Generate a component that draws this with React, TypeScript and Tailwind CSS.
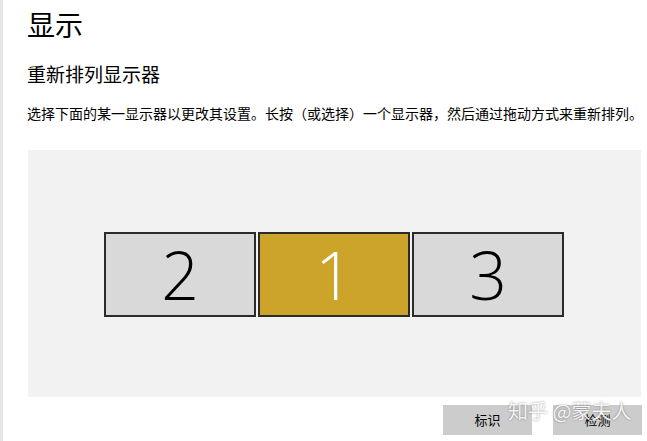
import React from "react";

const cjk = { fontFamily: '"Noto Sans CJK SC", "Noto Sans", sans-serif' };

function Monitor({ n, active }: { n: string; active?: boolean }) {
  return (
    <div
      className={`flex h-[85px] w-[152px] items-center justify-center border-2 border-[#2b2b2b] ${
        active ? "bg-[#cca42a] text-white" : "bg-[#d9d9d9] text-black"
      }`}
    >
      <span
        className="text-[66px] font-light leading-none"
        style={{ fontFamily: '"Open Sans", "Noto Sans", sans-serif' }}
      >
        {n}
      </span>
    </div>
  );
}

export default function App() {
  return (
    <div className="flex h-[441px] w-[647px] overflow-hidden bg-white" style={cjk}>
      <div className="w-[3px] shrink-0 bg-[#e6e6e6]" />
      <div className="relative flex flex-1 flex-col pl-[24px]">
        <h1 className="mt-[6px] text-[28px] leading-[36px] text-black">显示</h1>
        <h2 className="mt-[19px] text-[19px] leading-[26px] text-black">重新排列显示器</h2>
        <p className="mt-[16px] text-[14px] leading-[20px] text-black">
          选择下面的某一显示器以更改其设置。长按（或选择）一个显示器，然后通过拖动方式来重新排列。
        </p>
        <div className="ml-[1px] mt-[27px] flex h-[247px] w-[613px] items-center bg-[#f2f2f2] pl-[76px]">
          <div className="mt-[1px] flex gap-[2px]">
            <Monitor n="2" />
            <Monitor n="1" active />
            <Monitor n="3" />
          </div>
        </div>
        <div className="mt-[8px] flex gap-[21px] pl-[416px]">
          <button className="h-[30px] w-[89px] bg-[#cccccc] text-[13px] text-black">标识</button>
          <button className="h-[30px] w-[89px] bg-[#cccccc] text-[13px] text-black">检测</button>
        </div>
        <div
          className="pointer-events-none absolute left-[505px] top-[396px] text-[20px] leading-[30px] text-white/90"
          style={{ textShadow: "0 0 2px rgba(0,0,0,0.45)" }}
        >
          知乎 @蒙夫人
        </div>
      </div>
    </div>
  );
}
